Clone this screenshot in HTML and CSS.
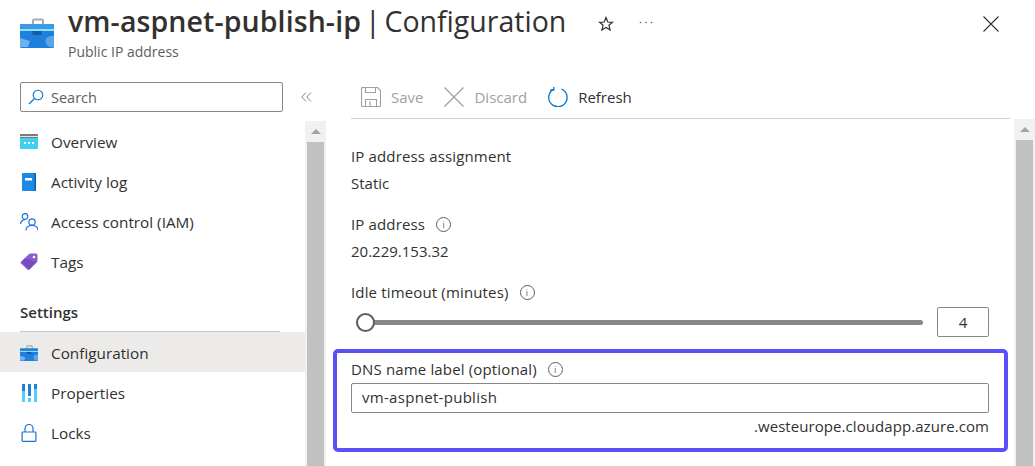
FILE: index.html
```html
<!DOCTYPE html>
<html lang="en">

<head>
    <meta charset="UTF-8">
    <meta name="viewport" content="width=device-width, initial-scale=1.0">
    <title>vm-aspnet-publish-ip | Configuration</title>
    <link rel="stylesheet" href="styles.css">
</head>

<body>
    <!-- blade header -->
    <header class="header">
        <svg class="header-icon" viewBox="0 0 34 30">
            <path d="M13 7V2.5q0-1 1-1h8q1 0 1 1V7" fill="none" stroke="#a9a9a9" stroke-width="2" />
            <rect x="0" y="6" width="34" height="24" rx="1.5" fill="#1e7fdc" />
            <rect x="0" y="6" width="34" height="5" fill="#3b9be8" />
            <rect x="0" y="11" width="34" height="2" fill="#8fe4f8" />
            <rect x="12.500" y="13" width="9" height="4" fill="#0f5fa8" />
            <path d="M0 20l10 3-2 6H1q-1 0-1-1z" fill="#6db3ec" />
            <path d="M34 18h-3a5.500 5.500 0 0 0 0 11h3z" fill="#5aa5e6" />
        </svg>
        <div class="header-text">
            <h1 class="title"><b>vm-aspnet-publish-ip</b> | Configuration</h1>
            <div class="subtitle">Public IP address</div>
        </div>
        <svg class="star" viewBox="0 0 16 16">
            <path d="M8 1.500l1.800 4.500 4.700.3-3.600 3 1.200 4.700L8 11.400l-4.100 2.600 1.200-4.700-3.600-3 4.700-.3z" fill="none" stroke="#323130" stroke-width="1.200" />
        </svg>
        <svg class="more" viewBox="0 0 14 3">
            <circle cx="1.500" cy="1.500" r=".8" fill="#605e5c" />
            <circle cx="7" cy="1.500" r=".8" fill="#605e5c" />
            <circle cx="12.500" cy="1.500" r=".8" fill="#605e5c" />
        </svg>
        <svg class="close" viewBox="0 0 16 16">
            <path d="M.5.5l15 15M15.500.5l-15 15" stroke="#323130" stroke-width="1.100" fill="none" />
        </svg>
    </header>

    <div class="layout">
        <!-- left menu -->
        <aside class="sidebar">
            <div class="search-row">
                <div class="search">
                    <svg class="search-icon" viewBox="0 0 16 16">
                        <circle cx="10" cy="6" r="4.800" fill="none" stroke="#0078d4" stroke-width="1.100" />
                        <path d="M6.500 9.500L1 15" stroke="#0078d4" stroke-width="1.200" />
                    </svg>
                    <span>Search</span>
                </div>
                <svg class="collapse" viewBox="0 0 11 10">
                    <path d="M5 .5L.8 5 5 9.500M10 .5L5.800 5 10 9.500" fill="none" stroke="#8a8886" stroke-width="1" />
                </svg>
            </div>
            <div class="menu-wrap">
                <nav class="menu">
                    <a class="item">
                        <svg class="item-icon" viewBox="0 0 18 16">
                            <rect y="0" width="18" height="15" rx="1" fill="#3fd0f0" />
                            <path d="M0 1q0-1 1-1h16q1 0 1 1v3H0z" fill="#7a7a7a" />
                            <rect y="2" width="18" height="1" fill="#fff" opacity=".8" />
                            <rect x="4" y="8" width="2" height="2" fill="#fff" />
                            <rect x="8" y="8" width="2" height="2" fill="#fff" />
                            <rect x="12" y="8" width="2" height="2" fill="#fff" />
                        </svg>
                        Overview
                    </a>
                    <a class="item">
                        <svg class="item-icon" viewBox="0 0 18 18">
                            <path d="M2 1q0-1 1-1h12q1 0 1 1v17H3q-1 0-1-1z" fill="#1e88e5" />
                            <rect x="14.500" y="0" width="1.500" height="18" fill="#0f5fa8" />
                            <rect x="5" y="5" width="7" height="2.500" fill="#fff" />
                        </svg>
                        Activity log
                    </a>
                    <a class="item">
                        <svg class="item-icon" viewBox="0 0 18 18">
                            <g fill="none" stroke="#1a73d9" stroke-width="1.200">
                                <circle cx="5" cy="3.500" r="2.800" />
                                <circle cx="12" cy="9" r="3.200" />
                                <path d="M.6 11c0-2 1.500-4 4-4" />
                                <path d="M6 17.500c0-3 2.500-5.200 6-5.200s6 2.200 6 5.200" />
                            </g>
                        </svg>
                        Access control (IAM)
                    </a>
                    <a class="item">
                        <svg class="item-icon" viewBox="0 0 18 18">
                            <path d="M1 9l8-8q.6-.6 1.500-.6H16q1.500 0 1.500 1.500v5.500q0 1-.6 1.600l-7.500 7.500q-1 1-2 0L1 10.500q-.8-.8 0-1.500z" fill="#8d5bd1" />
                            <path d="M9.500 16.500L1 9l4-4 12 4z" fill="#6b3fb5" opacity=".6" />
                            <circle cx="14" cy="4" r="1.300" fill="#fff" />
                        </svg>
                        Tags
                    </a>
                    <div class="menu-heading">Settings</div>
                    <a class="item active">
                        <svg class="item-icon" viewBox="0 0 34 30">
                            <path d="M13 7V2.500q0-1 1-1h8q1 0 1 1V7" fill="none" stroke="#a9a9a9" stroke-width="2" />
                            <rect y="6" width="34" height="24" rx="1.500" fill="#1e7fdc" />
                            <rect y="11" width="34" height="2" fill="#8fe4f8" />
                            <rect x="12.500" y="13" width="9" height="4" fill="#0f5fa8" />
                            <path d="M0 20l10 3-2 6H1q-1 0-1-1z" fill="#6db3ec" />
                            <path d="M34 18h-3a5.500 5.500 0 0 0 0 11h3z" fill="#5aa5e6" />
                        </svg>
                        Configuration
                    </a>
                    <a class="item">
                        <svg class="item-icon" viewBox="0 0 18 18">
                            <rect x="2" y="0" width="3" height="18" fill="#4fd2f5" />
                            <rect x="2" y="0" width="3" height="7" fill="#1e7fdc" />
                            <rect x="8" y="0" width="3" height="18" fill="#1e7fdc" />
                            <rect x="8" y="12" width="3" height="2" fill="#fff" />
                            <rect x="8" y="14" width="3" height="4" fill="#4fd2f5" />
                            <rect x="14" y="0" width="3" height="18" fill="#4fd2f5" />
                            <rect x="14" y="0" width="3" height="5" fill="#1e7fdc" />
                        </svg>
                        Properties
                    </a>
                    <a class="item">
                        <svg class="item-icon" viewBox="0 0 18 18">
                            <path d="M5 8V4.500a4 4 0 0 1 8 0V8" fill="none" stroke="#1a73d9" stroke-width="1.200" />
                            <rect x="2.100" y="8" width="13.800" height="9.400" rx=".8" fill="#fff" stroke="#1a73d9" stroke-width="1.200" />
                        </svg>
                        Locks
                    </a>
                </nav>
                <div class="scrollbar menu-scroll">
                    <span class="scroll-up"></span>
                    <span class="scroll-thumb"></span>
                </div>
            </div>
        </aside>

        <!-- main content -->
        <main class="main">
            <div class="toolbar">
                <span class="tool disabled">
                    <svg class="tool-icon" viewBox="0 0 20 20">
                        <path d="M.5 1.500q0-1 1-1h15l3 3v15q0 1-1 1h-17q-1 0-1-1zM4.500.5v5h10v-5M4.500 19.500v-7h11v7M9 14v5.500" fill="none" stroke="#a19f9d" stroke-width="1.100" />
                    </svg>
                    Save
                </span>
                <span class="tool disabled">
                    <svg class="tool-icon" viewBox="0 0 20 20">
                        <path d="M.5.5l19 19M19.500.5l-19 19" fill="none" stroke="#a19f9d" stroke-width="1.200" />
                    </svg>
                    Discard
                </span>
                <span class="tool">
                    <svg class="tool-icon" viewBox="0 0 20 20">
                        <path d="M5.500 2.400a9.200 9.200 0 1 0 8 -.4" fill="none" stroke="#0078d4" stroke-width="1.300" />
                        <path d="M5.800 -.5v3.500h-3.500" fill="none" stroke="#0078d4" stroke-width="1.300" />
                    </svg>
                    Refresh
                </span>
            </div>
            <div class="content-wrap">
                <div class="content">
                    <div class="field">
                        <div class="label">IP address assignment</div>
                        <div class="value">Static</div>
                    </div>
                    <div class="field">
                        <div class="label">IP address<span class="info">i</span></div>
                        <div class="value">20.229.153.32</div>
                    </div>
                    <div class="field slider-field">
                        <div class="label">Idle timeout (minutes)<span class="info">i</span></div>
                        <div class="slider-row">
                            <div class="slider">
                                <span class="slider-thumb"></span>
                            </div>
                            <div class="number">4</div>
                        </div>
                    </div>
                    <div class="highlight">
                        <div class="label">DNS name label (optional)<span class="info">i</span></div>
                        <div class="textbox">vm-aspnet-publish</div>
                        <div class="suffix">.westeurope.cloudapp.azure.com</div>
                    </div>
                </div>
                <div class="scrollbar content-scroll">
                    <span class="scroll-up"></span>
                    <span class="scroll-thumb"></span>
                </div>
            </div>
        </main>
    </div>
</body>

</html>
```

FILE: styles.css
```css
* {
    box-sizing: border-box;
    margin: 0;
    padding: 0;
}

html,
body {
    height: 466px;
    overflow: hidden;
}

body {
    font-family: "Open Sans", "Noto Sans", sans-serif;
    font-size: 15px;
    color: #323130;
    background-color: #fff;
}

.header {
    display: flex;
    height: 82px;
    padding: 0 36px 0 20px;
}

.header-icon {
    width: 34px;
    height: 30px;
    margin-top: 18px;
}

.header-text {
    margin-left: 14px;
}

.title {
    font-size: 28.500px;
    font-weight: 400;
    line-height: 36px;
    margin-top: 3px;
    word-spacing: -3.500px;
    white-space: nowrap;
}

.title b {
    font-weight: 600;
    letter-spacing: .1px;
    word-spacing: 0;
}

.subtitle {
    font-size: 14px;
    line-height: 20px;
    color: #605e5c;
    margin-top: 3px;
}

.star {
    width: 16px;
    height: 16px;
    margin: 16px 0 0 32px;
}

.more {
    width: 14px;
    height: 3px;
    margin: 21px 0 0 25px;
}

.close {
    width: 16px;
    height: 16px;
    margin: 16px 0 0 auto;
}

.layout {
    display: flex;
}

.sidebar {
    width: 351px;
    flex-shrink: 0;
}

.search-row {
    display: flex;
    align-items: center;
    padding-left: 20px;
    height: 39px;
    padding-bottom: 9px;
}

.search {
    display: flex;
    align-items: center;
    width: 263px;
    height: 30px;
    border: 1px solid #8a8886;
    border-radius: 2px;
    padding-left: 7px;
    font-size: 14.500px;
    color: #605e5c;
}

.search-icon {
    width: 16px;
    height: 16px;
    margin-right: 7px;
}

.collapse {
    width: 11px;
    height: 10px;
    margin-left: 18px;
}

.menu-wrap {
    display: flex;
}

.menu {
    width: 305px;
}

.item {
    display: flex;
    align-items: center;
    height: 40px;
    padding: 1px 0 0 20px;
    font-size: 15.300px;
    white-space: nowrap;
}

.item.active {
    background-color: #edebe9;
}

.item-icon {
    width: 18px;
    height: 18px;
    margin-right: 13px;
    flex-shrink: 0;
}

.menu-heading {
    margin: 21px 25px 0 20px;
    height: 30px;
    font-weight: 600;
    border-bottom: 1px solid #c8c6c4;
}

.scrollbar {
    background-color: #f1f1f1;
    display: flex;
    flex-direction: column;
    align-items: center;
    flex-shrink: 0;
    width: 21px;
}

.menu-scroll {
    height: 345px;
}

.content-scroll {
    height: 347px;
}

.scroll-up {
    flex-shrink: 0;
    width: 0;
    height: 0;
    margin: 8px 0;
    border-left: 5px solid transparent;
    border-right: 5px solid transparent;
    border-bottom: 5px solid #a3a3a3;
}

.scroll-thumb {
    flex: 1;
    width: calc(100% - 4px);
    background-color: #c1c1c1;
}

.main {
    flex: 1;
    min-width: 0;
}

.toolbar {
    display: flex;
    align-items: center;
    gap: 21px;
    height: 37px;
    margin-right: 25px;
    padding: 0 0 6px 10px;
    border-bottom: 1px solid #d2d0ce;
}

.tool {
    display: flex;
    align-items: center;
    gap: 10px;
}

.tool.disabled {
    color: #a19f9d;
}

.tool-icon {
    width: 20px;
    height: 20px;
}

.content-wrap {
    display: flex;
}

.content {
    flex: 1;
    padding-top: 25px;
}

.field {
    margin-bottom: 18px;
}

.slider-field {
    margin-bottom: 12px;
}

.label {
    display: flex;
    align-items: center;
    gap: 11px;
    height: 24px;
    letter-spacing: .15px;
    white-space: pre;
}

.value {
    margin-top: 4px;
    height: 22px;
    line-height: 22px;
}

.info {
    display: inline-flex;
    align-items: center;
    justify-content: center;
    width: 15px;
    height: 15px;
    border: 1px solid #605e5c;
    border-radius: 50%;
    font-size: 9px;
    line-height: 1;
    color: #605e5c;
}

.slider-row {
    display: flex;
    align-items: center;
    gap: 14px;
    margin-top: 3px;
    margin-right: 25px;
}

.slider {
    position: relative;
    flex: 1;
    height: 5px;
    margin-left: 5px;
    background-color: #8a8886;
    border-radius: 3px;
}

.slider-thumb {
    position: absolute;
    left: 0;
    top: -7px;
    width: 19px;
    height: 19px;
    background-color: #fff;
    border: 2px solid #605e5c;
    border-radius: 50%;
}

.number {
    width: 52px;
    height: 30px;
    line-height: 28px;
    text-align: center;
    border: 1px solid #8a8886;
    border-radius: 2px;
}

.highlight {
    width: 675px;
    height: 103px;
    margin-left: -18px;
    padding: 4px 15px 0 14px;
    border: 4px solid #5b50f8;
    border-radius: 5px;
}

.textbox {
    height: 30px;
    line-height: 27px;
    margin-top: 2px;
    padding-left: 10px;
    letter-spacing: .3px;
    border: 1px solid #8a8886;
    border-radius: 2px;
}

.suffix {
    margin-top: 2px;
    text-align: right;
    line-height: 22px;
    letter-spacing: .07px;
}
```
